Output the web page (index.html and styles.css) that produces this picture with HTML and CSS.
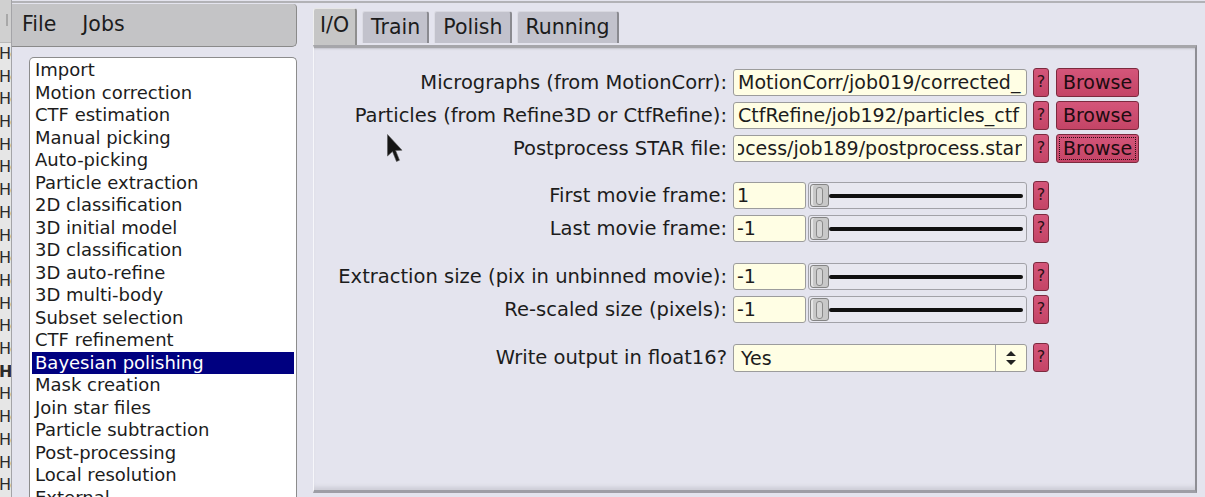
FILE: index.html
```html
<!DOCTYPE html>
<html>
<head>
<meta charset="utf-8">
<link rel="stylesheet" href="styles.css">
</head>
<body>
<div class="screen">
  <div class="strip">
    <div class="strip-top"><span class="strip-mark"></span></div>
    <div class="strip-list">
      <span>Hc</span><span>Hc</span><span>Hc</span><span>Hc</span><span>Hc</span><span>Hc</span><span>Hc</span><span>Hc</span><span>Hc</span><span>Hc</span><span>Hc</span><span>Hc</span><span>Hc</span><span>Hc</span><span class="b">Hc</span><span>Hc</span><span>Hc</span><span>Hc</span><span>Hc</span><span>Hc</span>
    </div>
  </div>
  <div class="app">
    <div class="leftcol">
      <div class="menubar"><span class="menu">File</span><span class="menu">Jobs</span></div>
      <div class="joblist">
        <div class="job">Import</div>
        <div class="job">Motion correction</div>
        <div class="job">CTF estimation</div>
        <div class="job">Manual picking</div>
        <div class="job">Auto-picking</div>
        <div class="job">Particle extraction</div>
        <div class="job">2D classification</div>
        <div class="job">3D initial model</div>
        <div class="job">3D classification</div>
        <div class="job">3D auto-refine</div>
        <div class="job">3D multi-body</div>
        <div class="job">Subset selection</div>
        <div class="job">CTF refinement</div>
        <div class="job selected">Bayesian polishing</div>
        <div class="job">Mask creation</div>
        <div class="job">Join star files</div>
        <div class="job">Particle subtraction</div>
        <div class="job">Post-processing</div>
        <div class="job">Local resolution</div>
        <div class="job">External</div>
      </div>
    </div>
    <div class="rightcol">
      <div class="tabs">
        <div class="tab active">I/O</div>
        <div class="tab">Train</div>
        <div class="tab">Polish</div>
        <div class="tab">Running</div>
      </div>
      <div class="panel">
        <div class="form">
          <div class="row">
            <div class="label">Micrographs (from MotionCorr):</div>
            <div class="field"><span class="clip">MotionCorr/job019/corrected_</span></div>
            <div class="help">?</div>
            <div class="browse">Browse</div>
          </div>
          <div class="row">
            <div class="label">Particles (from Refine3D or CtfRefine):</div>
            <div class="field"><span class="clip">CtfRefine/job192/particles_ctf</span></div>
            <div class="help">?</div>
            <div class="browse">Browse</div>
          </div>
          <div class="row">
            <div class="label">Postprocess STAR file:</div>
            <div class="field"><span class="clip end"><bdi dir="ltr">ocess/job189/postprocess.star</bdi></span></div>
            <div class="help">?</div>
            <div class="browse focus"><span class="focus-ring">Browse</span></div>
          </div>

          <div class="row group">
            <div class="label">First movie frame:</div>
            <div class="field num"><span class="clip">1</span></div>
            <div class="slider"><div class="thumb"></div><div class="track"></div></div>
            <div class="help">?</div>
          </div>
          <div class="row">
            <div class="label">Last movie frame:</div>
            <div class="field num"><span class="clip">-1</span></div>
            <div class="slider"><div class="thumb"></div><div class="track"></div></div>
            <div class="help">?</div>
          </div>

          <div class="row group">
            <div class="label">Extraction size (pix in unbinned movie):</div>
            <div class="field num"><span class="clip">-1</span></div>
            <div class="slider"><div class="thumb"></div><div class="track"></div></div>
            <div class="help">?</div>
          </div>
          <div class="row">
            <div class="label">Re-scaled size (pixels):</div>
            <div class="field num"><span class="clip">-1</span></div>
            <div class="slider"><div class="thumb"></div><div class="track"></div></div>
            <div class="help">?</div>
          </div>

          <div class="row group">
            <div class="label">Write output in float16?</div>
            <div class="choice">
              <span class="choice-text">Yes</span>
              <span class="choice-btn">
                <svg width="12" height="16" viewBox="0 0 12 16"><path d="M1 6 L6 1 L11 6 Z M1 10 L6 15 L11 10 Z" fill="#222"/></svg>
              </span>
            </div>
            <div class="help">?</div>
          </div>
        </div>
      </div>
    </div>
  </div>
  <svg class="cursor" width="16" height="29" viewBox="0 0 16 29"><path d="M0.5 0.5 L0.5 22 L5.5 17.5 L9.5 27.5 L12.5 26.2 L8.6 16.5 L15 16.2 Z" fill="#151515" stroke="#555" stroke-width="0.6"/></svg>
</div>
</body>
</html>
```

FILE: styles.css
```css
html, body {
  margin: 0;
  padding: 0;
}
body {
  background: #e4e4ee;
  font-family: "DejaVu Sans", "Liberation Sans", sans-serif;
  color: #1c1c1c;
}
.screen {
  position: relative;
  width: 1205px;
  height: 497px;
  overflow: hidden;
  display: flex;
  background: #e4e4ee;
}
.strip {
  width: 11px;
  flex: 0 0 11px;
  border-right: 1px solid #a4a4a8;
  background: #e6e6e6;
  display: flex;
  flex-direction: column;
  overflow: hidden;
}
.strip-top {
  height: 43px;
  background: #d0d0d0;
  border-bottom: 1px solid #b8b8b8;
}
.strip-mark {
  display: block;
  width: 2px;
  height: 12px;
  margin: 14px 0 0 6px;
  background: #a8a8a8;
}
.strip-list {
  display: flex;
  flex-direction: column;
  font-size: 16px;
  line-height: 22.7px;
  color: #2a2a2a;
  white-space: nowrap;
  margin-left: -1px;
  letter-spacing: -1px;
}
.strip-list .b {
  font-weight: bold;
}
.app {
  flex: 1;
  display: flex;
  align-items: flex-start;
  border-top: 2px solid #b2b2b6;
  margin-top: 1px;
}
.leftcol {
  width: 285px;
  flex: 0 0 285px;
  display: flex;
  flex-direction: column;
  margin-top: 1px;
}
.menubar {
  height: 42px;
  background: #c4c4c6;
  border-right: 1px solid #8a8a8a;
  border-bottom: 1px solid #8a8a8a;
  border-radius: 0 4px 5px 0;
  display: flex;
  align-items: center;
  gap: 26px;
  padding-left: 10px;
  font-size: 20.5px;
}
.menu {
  display: block;
  padding-bottom: 2px;
}
.joblist {
  margin-top: 10px;
  margin-left: 17px;
  height: 460px;
  background: #ffffff;
  border: 1px solid #8c8c8c;
  border-bottom: none;
  border-radius: 5px 5px 0 0;
  padding: 1px 2px 0 2px;
  font-size: 18px;
  line-height: 22.5px;
}
.job {
  padding-left: 3px;
  white-space: nowrap;
}
.job.selected {
  background: #000080;
  color: #ffffff;
}
.rightcol {
  margin-left: 16px;
  width: 884px;
  flex: 0 0 884px;
  display: flex;
  flex-direction: column;
}
.tabs {
  height: 37px;
  margin-top: 5px;
  display: flex;
  align-items: flex-start;
  gap: 5px;
  font-size: 20.5px;
}
.tab {
  box-sizing: border-box;
  height: 32px;
  margin-top: 3px;
  padding: 0 7px 0 8px;
  line-height: 30px;
  background: #c2c2cc;
  border-top: 1px solid #d8d8e0;
  border-left: 1px solid #dcdce4;
  border-right: 2px solid #8a8a90;
  border-radius: 3px 3px 0 0;
}
.tab.active {
  height: 37px;
  margin-top: 0;
  line-height: 33px;
  background: #c6c6c6;
  border-left: 1px solid #eeeeee;
  border-top: 1px solid #e6e6e6;
  border-right: 2px solid #8e8e8e;
  padding: 0 6px;
}
.panel {
  box-sizing: border-box;
  height: 448px;
  background: #e4e4ee;
  border-top: 3px solid #a6a6aa;
  border-left: 1px solid #f6f6fa;
  border-right: 2px solid #8e8e94;
  border-bottom: 3px solid #9e9ea6;
  box-shadow: inset 0 -5px 4px -2px #cdcdd6, inset 0 3px 2px -2px #c4c4cc;
}
.form {
  display: flex;
  flex-direction: column;
  gap: 4px;
  padding-top: 20px;
}
.row {
  display: flex;
  align-items: center;
  height: 29px;
}
.row.group {
  margin-top: 15px;
}
.row.group:nth-child(4) {
  margin-top: 14px;
}
.label {
  flex: 0 0 413px;
  width: 413px;
  text-align: right;
  font-size: 19.5px;
  white-space: nowrap;
  margin-right: 6px;
}
.field {
  box-sizing: border-box;
  width: 294px;
  height: 27px;
  flex: 0 0 294px;
  background: #fffee4;
  border: 1px solid #9c9c9c;
  border-radius: 3px;
  padding: 0 4px;
  font-size: 19px;
  line-height: 25px;
}
.clip {
  display: block;
  overflow: hidden;
  white-space: nowrap;
}
.clip.end {
  direction: rtl;
}
.field.num {
  width: 73px;
  flex: 0 0 73px;
  padding-left: 3px;
}
.slider {
  box-sizing: border-box;
  width: 219px;
  flex: 0 0 219px;
  height: 27px;
  margin-left: 2px;
  border: 1px solid #a2a2a8;
  border-radius: 3px;
  background: #e8e8f0;
  display: flex;
  align-items: center;
  padding: 0 3px 0 1px;
}
.thumb {
  box-sizing: border-box;
  width: 19px;
  height: 23px;
  flex: 0 0 19px;
  background: #c8c8c8;
  border: 1px solid #848484;
  border-radius: 3px;
  position: relative;
  box-shadow: inset 2px 0 0 #e6e6e6;
}
.thumb::after {
  content: "";
  position: absolute;
  left: 5px;
  top: 2px;
  width: 5px;
  height: 16px;
  border: 1px solid #8a8a8a;
  border-radius: 3px;
  background: #d4d4d4;
}
.track {
  flex: 1;
  height: 4px;
  background: #101010;
  border-radius: 2px;
}
.help {
  box-sizing: border-box;
  width: 16px;
  height: 29px;
  flex: 0 0 16px;
  margin-left: 6px;
  background: linear-gradient(#d4567a, #c44466);
  border: 1px solid #7c2a3e;
  border-radius: 3px;
  font-size: 16px;
  line-height: 26px;
  text-align: center;
  color: #2a1015;
  overflow: hidden;
}
.browse {
  box-sizing: border-box;
  width: 83px;
  height: 29px;
  flex: 0 0 83px;
  margin-left: 7px;
  background: linear-gradient(#d4567a, #c44466);
  border: 1px solid #7c2a3e;
  border-radius: 3px;
  font-size: 19px;
  line-height: 26px;
  text-align: center;
  color: #1e0c10;
}
.browse.focus {
  padding: 2px;
  line-height: 22px;
}
.focus-ring {
  display: block;
  height: 23px;
  border: 1px dotted #2a1015;
  box-sizing: border-box;
  line-height: 21px;
}
.choice {
  box-sizing: border-box;
  width: 294px;
  flex: 0 0 294px;
  height: 28px;
  background: #fffee4;
  border: 1px solid #9c9c9c;
  border-radius: 3px;
  display: flex;
  align-items: center;
  font-size: 19px;
}
.choice-text {
  flex: 1;
  padding-left: 7px;
}
.choice-btn {
  width: 30px;
  height: 100%;
  border-left: 1px solid #a8a8a8;
  display: flex;
  align-items: center;
  justify-content: center;
}
.cursor {
  position: absolute;
  left: 387px;
  top: 134px;
}
```
